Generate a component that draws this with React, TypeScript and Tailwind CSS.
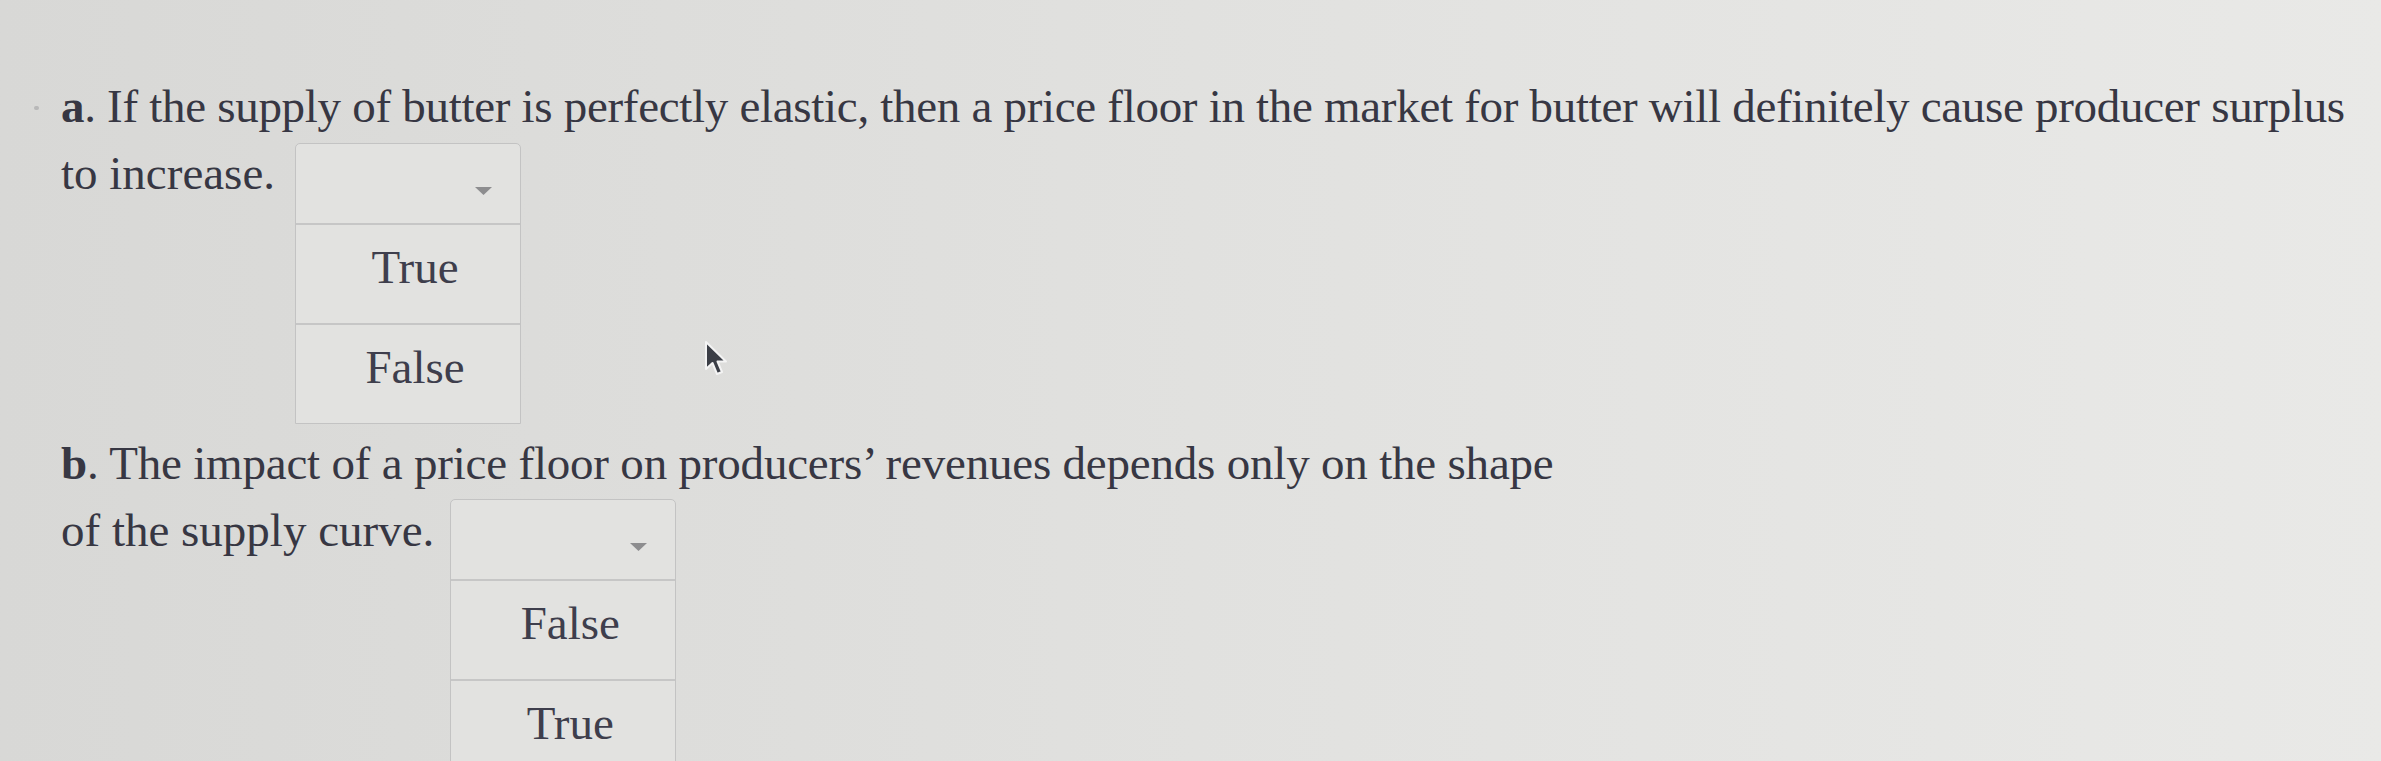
import React from 'react';

function Caret() {
  return (
    <svg width="17" height="8" viewBox="0 0 17 8" className="block">
      <path d="M0 0 L17 0 L8.5 8 Z" fill="#8d8d8f" />
    </svg>
  );
}

function Dropdown({ options }: { options: string[] }) {
  return (
    <div className="w-[226px] shrink-0 rounded-t-[5px] border border-[#c3c3c3] bg-[#e2e2e0]">
      <div className="flex h-[79px] justify-end pr-[28px] pt-[43px]">
        <Caret />
      </div>
      {options.map(o => (
        <div key={o} className="h-[100px] border-t-2 border-[#c6c6c6] pl-[14px] pt-[16px] text-center leading-[52px] text-[#3e3e4c]">
          {o}
        </div>
      ))}
    </div>
  );
}

function Cursor() {
  return (
    <svg width="26" height="40" viewBox="0 0 26 40" className="absolute left-[703px] top-[339px]">
      <path d="M3 3 L3 30 L9.5 24 L14 35 L19 33 L14.5 22.5 L23 22.5 Z" fill="#3b3e46" stroke="#f4f4f4" strokeWidth="2" strokeLinejoin="round" />
    </svg>
  );
}

export default function App() {
  return (
    <div className="relative h-[761px] w-full overflow-hidden bg-gradient-to-r from-[#d8d8d6] via-[#e1e1df] to-[#e9e9e7] font-['Liberation_Serif','Times_New_Roman',serif] text-[47px] text-[#373743]">
      <span className="absolute left-[34px] top-[106px] h-[4px] w-[5px] rounded-full bg-[#b8b8b8]" />
      <div className="pl-[61px] pt-[73px]">
        <p className="leading-[67px] tracking-[-0.3px] whitespace-nowrap">
          <b>a</b>. If the supply of butter is perfectly elastic, then a price floor in the market for butter will definitely cause producer surplus
        </p>
        <div className="flex items-start">
          <span className="leading-[67px]">to increase.</span>
          <div className="ml-[20px] mt-[3px]">
            <Dropdown options={['True', 'False']} />
          </div>
        </div>

        <p className="mt-[6px] leading-[67px] tracking-[-0.2px] whitespace-nowrap">
          <b>b</b>. The impact of a price floor on producers’ revenues depends only on the shape
        </p>
        <div className="flex items-start">
          <span className="leading-[67px]">of the supply curve.</span>
          <div className="ml-[16px] mt-[2px]">
            <Dropdown options={['False', 'True']} />
          </div>
        </div>
      </div>
      <Cursor />
    </div>
  );
}
